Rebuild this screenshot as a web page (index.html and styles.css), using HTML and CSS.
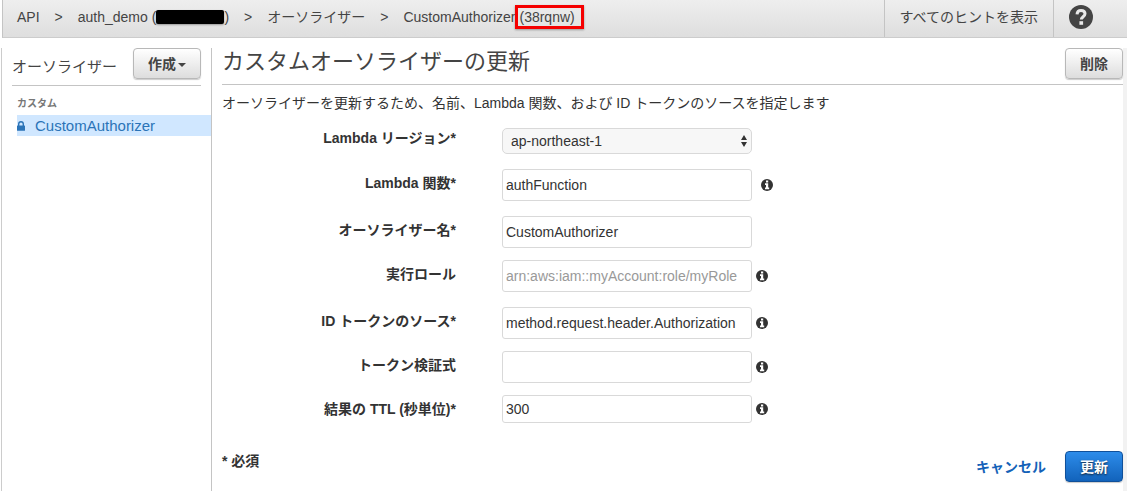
FILE: index.html
```html
<!DOCTYPE html>
<html lang="ja">

<head>
  <meta charset="UTF-8">
  <meta name="viewport" content="width=device-width, initial-scale=1.0">
  <title>カスタムオーソライザーの更新</title>
  <link rel="stylesheet" href="styles.css">
</head>

<body>
  <!-- Shared icons -->
  <svg class="sprite" aria-hidden="true">
    <symbol id="icon-info" viewBox="0 0 12 12">
      <circle cx="6" cy="6" r="6" fill="#333" />
      <path d="M5 1.500h2.200v2H5zM4 4.300h3.200v4.200H8.200V10.200H4V8.500h1V6H4z" fill="#fff" />
    </symbol>
  </svg>

  <header class="topbar">
    <nav class="breadcrumb">
      <a href="#">API</a>
      <span>&gt;</span>
      <a href="#">auth_demo (<span class="redacted"></span>)</a>
      <span>&gt;</span>
      <a href="#">オーソライザー</a>
      <span>&gt;</span>
      <span class="current">CustomAuthorizer<span class="highlight">(38rqnw)</span></span>
    </nav>
    <button type="button" class="hints">すべてのヒントを表示</button>
    <button type="button" class="help" aria-label="ヘルプ">
      <svg width="24" height="24" viewBox="0 0 24 24">
        <circle cx="12" cy="12" r="12" fill="#444" />
        <path d="M8 9.300C8.200 6.700 9.700 5.500 12 5.500c2.400 0 4 1.300 4 3.300 0 2.900-3.700 2.900-3.700 5.700" fill="none" stroke="#e8e8e8" stroke-width="3" />
        <path d="M10.400 16.200h3.700v3.600h-3.700z" fill="#e8e8e8" />
      </svg>
    </button>
  </header>

  <div class="layout">
    <aside class="sidebar">
      <div class="sidebar-header">
        <h2>オーソライザー</h2>
        <button type="button" class="btn">作成<span class="caret"></span></button>
      </div>
      <h3>カスタム</h3>
      <a href="#" class="item">
        <svg width="8" height="10" viewBox="0 0 8 10">
          <path d="M1.700 5V3a2.300 2.300 0 0 1 4.600 0v2" fill="none" stroke="#2b74b8" stroke-width="1.400" />
          <rect y="4.400" width="8" height="5.400" rx="0.600" fill="#2b74b8" />
        </svg>
        CustomAuthorizer
      </a>
    </aside>

    <main class="content">
      <div class="content-header">
        <h1>カスタムオーソライザーの更新</h1>
        <button type="button" class="btn">削除</button>
      </div>
      <p class="description">オーソライザーを更新するため、名前、Lambda 関数、および ID トークンのソースを指定します</p>

      <form>
        <div class="row row-select">
          <label for="region">Lambda リージョン*</label>
          <div class="select">
            <select id="region" name="region">
              <option>ap-northeast-1</option>
            </select>
            <svg width="8" height="14" viewBox="0 0 8 14">
              <path d="M4 1l3 5H1zM4 13L1 8h6z" fill="#333" />
            </svg>
          </div>
        </div>
        <div class="row">
          <label for="function">Lambda 関数*</label>
          <input type="text" id="function" name="function" value="authFunction" required>
          <svg class="info info-wide"><use href="#icon-info" /></svg>
        </div>
        <div class="row">
          <label for="name">オーソライザー名*</label>
          <input type="text" id="name" name="name" value="CustomAuthorizer" required>
        </div>
        <div class="row row-optional">
          <label for="role">実行ロール</label>
          <input type="text" id="role" name="role" placeholder="arn:aws:iam::myAccount:role/myRole">
          <svg class="info"><use href="#icon-info" /></svg>
        </div>
        <div class="row">
          <label for="source">ID トークンのソース*</label>
          <input type="text" id="source" name="source" value="method.request.header.Authorization" required>
          <svg class="info"><use href="#icon-info" /></svg>
        </div>
        <div class="row row-optional">
          <label for="validation">トークン検証式</label>
          <input type="text" id="validation" name="validation">
          <svg class="info"><use href="#icon-info" /></svg>
        </div>
        <div class="row row-ttl">
          <label for="ttl">結果の TTL (秒単位)*</label>
          <input type="text" id="ttl" name="ttl" value="300" required>
          <svg class="info"><use href="#icon-info" /></svg>
        </div>

        <div class="actions">
          <span class="required">* 必須</span>
          <a href="#">キャンセル</a>
          <button type="submit" class="btn btn-primary">更新</button>
        </div>
      </form>
    </main>
  </div>
</body>

</html>
```
FILE: styles.css
```css
* {
  box-sizing: border-box;
}

body {
  margin: 0;
  min-height: 100vh;
  display: flex;
  flex-direction: column;
  font-family: "Liberation Sans", "Noto Sans CJK JP", sans-serif;
  font-size: 14px;
  line-height: 20px;
  color: #333;
  background-color: #fff;
}

h1,
h2,
h3,
p {
  margin: 0;
}

a {
  color: inherit;
  text-decoration: none;
}

button,
input,
select {
  font: inherit;
  color: inherit;
}

.sprite {
  display: none;
}

/* Top bar */
.topbar {
  display: flex;
  height: 38px;
  margin-left: 2px;
  border-left: 1px solid #c4c4c4;
  border-bottom: 1px solid #ccc;
  background: linear-gradient(#eee, #dedede);
  color: #444;
}

.breadcrumb {
  flex: 1;
  display: flex;
  align-items: center;
  gap: 15px;
  padding: 0 0 3px 14px;
  white-space: nowrap;
}

.redacted {
  display: inline-block;
  width: 68px;
  height: 14px;
  border-radius: 2px;
  background-color: #000;
  box-shadow: 0 1px 2px #999;
  vertical-align: -2px;
}

.current {
  display: flex;
  align-items: center;
}

.highlight {
  padding: 0 6px 0 1px;
  border: 3px solid #f50000;
  line-height: 18px;
  box-shadow: 0 1px 2px #999;
}

.hints,
.help {
  padding: 0 15px 3px;
  border: none;
  border-left: 1px solid #c4c4c4;
  background: none;
  cursor: pointer;
}

.hints {
  padding: 0 15px 3px;
}

.help {
  width: 74px;
  text-align: left;
}

.help svg {
  display: block;
}

/* Columns */
.layout {
  flex: 1;
  display: flex;
  margin: 10px 0 0 1px;
}

.sidebar {
  width: 211px;
  border-left: 1px solid #ccc;
  border-right: 1px solid #c4c4c4;
}

.sidebar-header {
  display: flex;
  justify-content: space-between;
  height: 38px;
  margin: 0 10px;
  border-bottom: 1px solid #c4c4c4;
}

.sidebar-header h2 {
  padding-top: 9px;
  font-size: 15px;
  font-weight: normal;
  color: #444;
}

.sidebar h3 {
  margin: 8px 0 1px 15px;
  font-size: 10px;
  color: #777;
}

.item {
  display: flex;
  align-items: center;
  gap: 10px;
  margin-left: 15px;
  background-color: #d0e7ff;
  color: #2b74b8;
  font-size: 15px;
  line-height: 21px;
}

.content {
  flex: 1;
  padding-left: 10px;
  border-right: 4px solid #f2f2f2;
}

.content-header {
  display: flex;
  justify-content: space-between;
  height: 37px;
  border-bottom: 1px solid #c4c4c4;
}

.content-header h1 {
  font-size: 22px;
  font-weight: normal;
  line-height: 28px;
  color: #444;
}

.description {
  margin: 8px 0 15px;
}

/* Buttons */
.btn {
  height: 31px;
  padding: 0 14px;
  border: 1px solid #b8b8b8;
  border-radius: 4px;
  background: linear-gradient(#fff, #ddd);
  box-shadow: 0 1px 1px #ccc;
  color: #444;
  font-weight: bold;
  white-space: nowrap;
  cursor: pointer;
}

.btn-primary {
  border-color: #10509a;
  background: linear-gradient(#2d8cea, #1263bb);
  color: #fff;
  text-shadow: 0 1px 2px #123;
}

.caret {
  display: inline-block;
  margin-left: 2px;
  border: 4px solid transparent;
  border-top-color: #444;
  border-bottom: none;
  vertical-align: 2px;
}

/* Form */
.row {
  display: flex;
  align-items: flex-start;
  margin-top: 15px;
}

.row-optional,
.row-ttl {
  margin-top: 12px;
}

.row label {
  width: 234px;
  margin-right: 46px;
  padding-top: 4px;
  font-weight: bold;
  text-align: right;
}

.row-select label {
  padding-top: 0;
}

.row input,
.select {
  width: 250px;
}

.row input {
  height: 32px;
  padding: 0 3px;
  border: 1px solid #d9d9d9;
  border-radius: 3px;
  background-color: #fff;
}

.row-ttl input {
  height: 28px;
}

.row input::placeholder {
  color: #999;
}

.select {
  position: relative;
}

.select select {
  display: block;
  width: 100%;
  height: 26px;
  padding: 0 20px 0 8px;
  border: 1px solid #d9d9d9;
  border-radius: 5px;
  background-color: #f7f7f7;
  appearance: none;
}

.select svg {
  position: absolute;
  top: 6px;
  right: 4px;
  pointer-events: none;
}

.info {
  width: 12px;
  height: 12px;
  margin-left: 4px;
  align-self: center;
}

.info-wide {
  margin-left: 9px;
}

.actions {
  display: flex;
  align-items: center;
  margin-top: 28px;
  font-weight: bold;
}

.actions a {
  margin-right: 19px;
  color: #1462b8;
}

.required {
  flex: 1;
  align-self: flex-start;
}
```
